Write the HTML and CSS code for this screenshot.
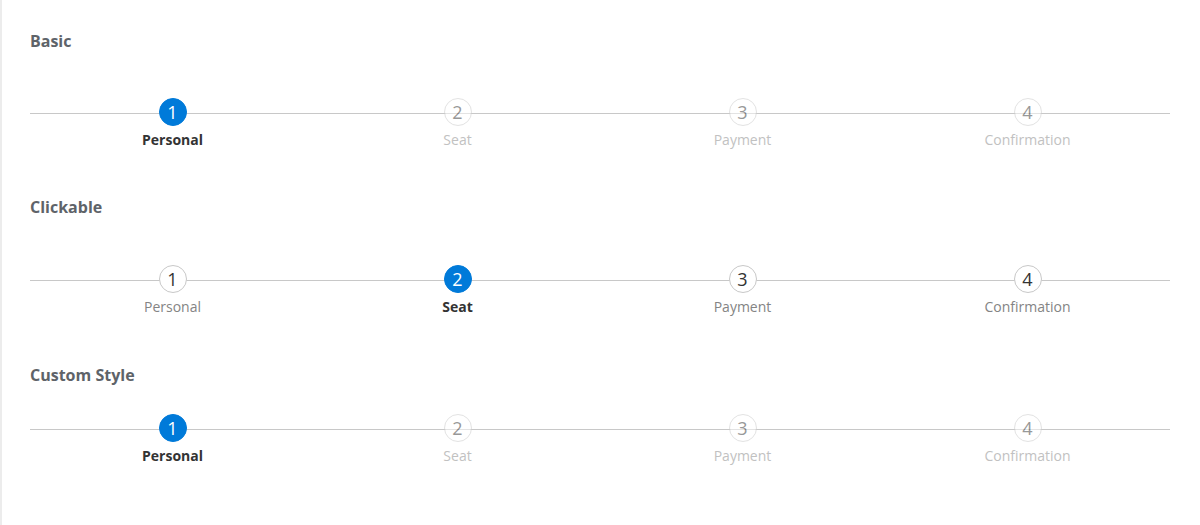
FILE: index.html
```html
<!DOCTYPE html>
<html>
<head>
<meta charset="utf-8">
<link rel="stylesheet" href="styles.css">
</head>
<body>
<div class="page">
  <section class="demo demo-basic">
    <h3 class="demo-title">Basic</h3>
    <div class="steps">
      <ol class="steps-list">
        <li class="step active"><span class="step-number">1</span><span class="step-title">Personal</span></li>
        <li class="step disabled"><span class="step-number">2</span><span class="step-title">Seat</span></li>
        <li class="step disabled"><span class="step-number">3</span><span class="step-title">Payment</span></li>
        <li class="step disabled"><span class="step-number">4</span><span class="step-title">Confirmation</span></li>
      </ol>
    </div>
  </section>
  <section class="demo demo-clickable">
    <h3 class="demo-title">Clickable</h3>
    <div class="steps">
      <ol class="steps-list">
        <li class="step"><span class="step-number">1</span><span class="step-title">Personal</span></li>
        <li class="step active"><span class="step-number">2</span><span class="step-title">Seat</span></li>
        <li class="step"><span class="step-number">3</span><span class="step-title">Payment</span></li>
        <li class="step"><span class="step-number">4</span><span class="step-title">Confirmation</span></li>
      </ol>
    </div>
  </section>
  <section class="demo demo-custom">
    <h3 class="demo-title">Custom Style</h3>
    <div class="steps">
      <ol class="steps-list">
        <li class="step active"><span class="step-number">1</span><span class="step-title">Personal</span></li>
        <li class="step disabled"><span class="step-number">2</span><span class="step-title">Seat</span></li>
        <li class="step disabled"><span class="step-number">3</span><span class="step-title">Payment</span></li>
        <li class="step disabled"><span class="step-number">4</span><span class="step-title">Confirmation</span></li>
      </ol>
    </div>
  </section>
</div>
</body>
</html>
```
FILE: styles.css
```css
html, body {
  margin: 0;
  padding: 0;
  background: #ffffff;
}
body {
  font-family: "Open Sans", "Liberation Sans", sans-serif;
  font-size: 14px;
  color: #333333;
}
.page {
  height: 525px;
  box-sizing: border-box;
  border-left: 2px solid #ececec;
  padding: 30px 30px 0 28px;
}
.demo-title {
  margin: 0;
  font-size: 16px;
  line-height: 22px;
  font-weight: 700;
  color: #5e6369;
}
.demo-basic .steps {
  margin-top: 46px;
}
.demo-clickable .steps {
  margin-top: 47px;
}
.demo-custom .steps {
  margin-top: 28px;
}
.demo-clickable {
  margin-top: 47px;
}
.demo-custom {
  margin-top: 48px;
}
.steps {
  position: relative;
}
.steps::before {
  content: "";
  position: absolute;
  left: 0;
  right: 0;
  top: 15px;
  border-top: 1px solid #c8c8c8;
}
.steps-list {
  position: relative;
  display: flex;
  list-style: none;
  margin: 0;
  padding: 0;
}
.step {
  flex: 1 1 0;
  display: flex;
  flex-direction: column;
  align-items: center;
}
.step-number {
  box-sizing: border-box;
  width: 28px;
  height: 28px;
  border: 1px solid #c8c8c8;
  border-radius: 50%;
  background: #ffffff;
  color: #333333;
  font-size: 18px;
  line-height: 26px;
  text-align: center;
}
.step-title {
  margin-top: 4px;
  font-size: 14px;
  line-height: 19px;
  color: #848484;
}
.step.active .step-number {
  background: #007ad9;
  border-color: #007ad9;
  color: #ffffff;
}
.step.active .step-title {
  font-weight: 700;
  color: #333333;
}
.step.disabled {
  opacity: 0.5;
}
```
